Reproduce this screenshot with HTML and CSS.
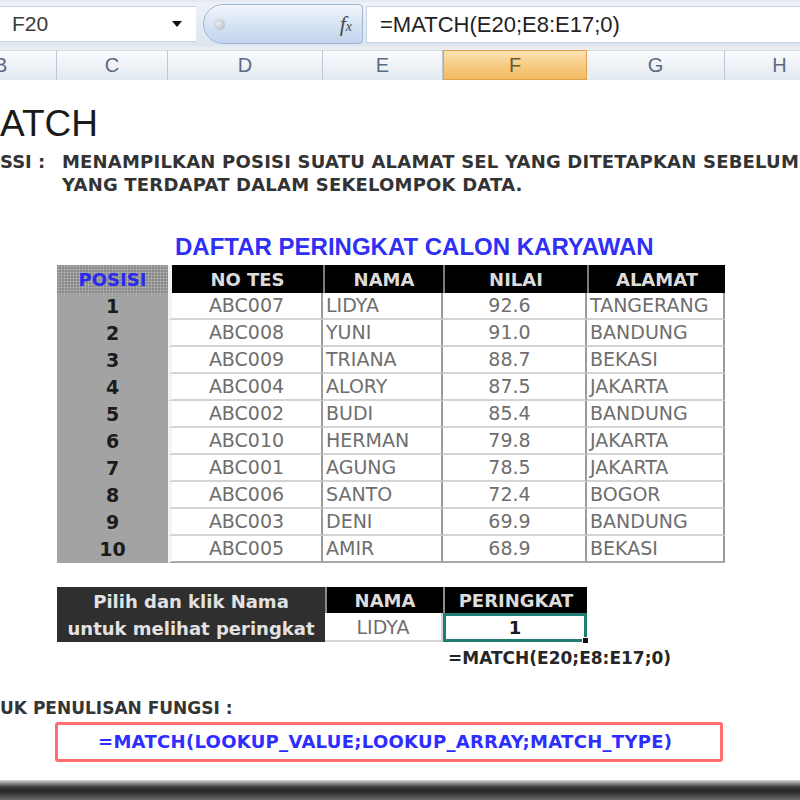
FILE: index.html
```html
<!DOCTYPE html>
<html>
<head>
<meta charset="utf-8">
<link rel="stylesheet" href="styles.css">
</head>
<body>
<div class="app">
  <div class="fbar">
    <div class="namebox"><span class="nb-text">F20</span><span class="nb-arrow"></span></div>
    <div class="fx-pill"><span class="dot"></span><span class="fx">f<span class="fx-x">x</span></span></div>
    <div class="finput">=MATCH(E20;E8:E17;0)</div>
  </div>
  <div class="colheads">
    <div class="ch ch-b"><span>B</span></div>
    <div class="ch ch-c">C</div>
    <div class="ch ch-d">D</div>
    <div class="ch ch-e">E</div>
    <div class="ch ch-f">F</div>
    <div class="ch ch-g">G</div>
    <div class="ch ch-h">H</div>
  </div>
  <div class="sheet">
    <div class="title">ATCH</div>
    <div class="desc">
      <div class="desc-label">SSI :</div>
      <div class="desc-text">MENAMPILKAN POSISI SUATU ALAMAT SEL YANG DITETAPKAN SEBELUMNYA<br>YANG TERDAPAT DALAM SEKELOMPOK DATA.</div>
    </div>
    <div class="list-title">DAFTAR PERINGKAT CALON KARYAWAN</div>
    <table class="rank">
      <colgroup>
        <col class="c-pos"><col class="c-no"><col class="c-nama"><col class="c-nilai"><col class="c-alamat">
      </colgroup>
      <thead>
        <tr><th class="pos">POSISI</th><th class="first">NO TES</th><th>NAMA</th><th>NILAI</th><th>ALAMAT</th></tr>
      </thead>
      <tbody>
        <tr><td class="pos">1</td><td class="ctr">ABC007</td><td>LIDYA</td><td class="num">92.6</td><td>TANGERANG</td></tr>
        <tr><td class="pos">2</td><td class="ctr">ABC008</td><td>YUNI</td><td class="num">91.0</td><td>BANDUNG</td></tr>
        <tr><td class="pos">3</td><td class="ctr">ABC009</td><td>TRIANA</td><td class="num">88.7</td><td>BEKASI</td></tr>
        <tr><td class="pos">4</td><td class="ctr">ABC004</td><td>ALORY</td><td class="num">87.5</td><td>JAKARTA</td></tr>
        <tr><td class="pos">5</td><td class="ctr">ABC002</td><td>BUDI</td><td class="num">85.4</td><td>BANDUNG</td></tr>
        <tr><td class="pos">6</td><td class="ctr">ABC010</td><td>HERMAN</td><td class="num">79.8</td><td>JAKARTA</td></tr>
        <tr><td class="pos">7</td><td class="ctr">ABC001</td><td>AGUNG</td><td class="num">78.5</td><td>JAKARTA</td></tr>
        <tr><td class="pos">8</td><td class="ctr">ABC006</td><td>SANTO</td><td class="num">72.4</td><td>BOGOR</td></tr>
        <tr><td class="pos">9</td><td class="ctr">ABC003</td><td>DENI</td><td class="num">69.9</td><td>BANDUNG</td></tr>
        <tr class="last"><td class="pos">10</td><td class="ctr">ABC005</td><td>AMIR</td><td class="num">68.9</td><td>BEKASI</td></tr>
      </tbody>
    </table>
    <div class="lookup">
      <div class="lk-prompt"><span>Pilih dan klik Nama</span><span>untuk melihat peringkat</span></div>
      <div class="lk-head">NAMA</div>
      <div class="lk-head">PERINGKAT</div>
      <div class="lk-name">LIDYA</div>
      <div class="lk-rank">1<span class="handle"></span></div>
    </div>
    <div class="formula-note">=MATCH(E20;E8:E17;0)</div>
    <div class="syntax-label">UK PENULISAN FUNGSI :</div>
    <div class="syntax-box">=MATCH(LOOKUP_VALUE;LOOKUP_ARRAY;MATCH_TYPE)</div>
  </div>
  <div class="bottom-band"></div>
</div>
</body>
</html>
```
FILE: styles.css
```css
* { box-sizing: border-box; }
html, body { margin: 0; padding: 0; background: #fff; }
.app {
  width: 800px;
  height: 800px;
  overflow: hidden;
  display: flex;
  flex-direction: column;
  font-family: "DejaVu Sans", sans-serif;
}

/* formula bar */
.fbar {
  height: 46px;
  flex: none;
  display: flex;
  align-items: center;
  background: linear-gradient(#eef2f7, #dde5ef);
  border-top: 2px solid #e6eaf0;
}
.namebox {
  width: 196px;
  height: 36px;
  background: #fff;
  display: flex;
  align-items: center;
  justify-content: space-between;
  padding: 0 12px 0 12px;
  border-top: 1px solid #c9d3df;
  border-bottom: 1px solid #c9d3df;
}
.nb-text {
  font-family: "Liberation Sans", Arial, sans-serif;
  font-size: 21px;
  color: #3a3a3a;
}
.nb-arrow {
  width: 0; height: 0;
  border-left: 5px solid transparent;
  border-right: 5px solid transparent;
  border-top: 6px solid #111;
  margin-right: 2px;
}
.fx-pill {
  margin-left: 7px;
  width: 160px;
  height: 40px;
  border-radius: 20px 4px 4px 20px;
  background: linear-gradient(#f2f6fc, #d2e0f2 60%, #c3d4ec);
  border: 1px solid #9fb6d4;
  display: flex;
  align-items: center;
  justify-content: space-between;
  padding: 0 10px 0 10px;
}
.dot {
  width: 11px; height: 11px;
  border-radius: 50%;
  background: radial-gradient(circle at 40% 40%, #eceff3, #a9b3bf);
}
.fx {
  font-family: "Liberation Serif", serif;
  font-style: italic;
  font-size: 22px;
  color: #4a4a4a;
}
.fx-x { font-size: 14px; }
.finput {
  flex: 1;
  height: 37px;
  margin-left: 3px;
  background: #fff;
  border-top: 1px solid #c9d3df;
  border-bottom: 1px solid #c9d3df;
  border-left: 1px solid #c9d3df;
  padding-left: 13px;
  font-family: "Liberation Sans", Arial, sans-serif;
  font-size: 22px;
  line-height: 35px;
  color: #222;
}

/* column headers */
.colheads {
  height: 34px;
  flex: none;
  display: flex;
  padding-top: 4px;
  background: #e9edf2;
}
.ch {
  flex: none;
  height: 30px;
  display: flex;
  align-items: center;
  justify-content: center;
  font-family: "Liberation Sans", Arial, sans-serif;
  font-size: 20px;
  color: #5b6b80;
  background: linear-gradient(#fafbfd, #e3e9f1);
  border-right: 1px solid #bcc8d8;
  border-top: 1px solid #d3dbe6;
}
.ch-b { width: 57px; justify-content: flex-start; }
.ch-b span { margin-left: -6px; }
.ch-c { width: 111px; }
.ch-d { width: 155px; }
.ch-e { width: 120px; }
.ch-f {
  width: 144px;
  background: linear-gradient(#fbe2b2, #f6c87c 60%, #f3ba63);
  border: 1px solid #e3a24a;
  color: #6a5a32;
}
.ch-g { width: 138px; }
.ch-h { width: 110px; }

/* sheet body */
.sheet {
  flex: 1;
  position: relative;
  overflow: hidden;
}
.title {
  margin-top: 25px;
  height: 37px;
  line-height: 37px;
  font-family: "Liberation Sans", Arial, sans-serif;
  font-size: 37px;
  color: #1a1a1a;
}
.desc {
  margin-top: 8px;
  display: flex;
  font-size: 18px;
  font-weight: bold;
  line-height: 23px;
  color: #333;
  white-space: nowrap;
}
.desc-label { width: 62px; flex: none; }
.desc-text { letter-spacing: 0.2px; }
.list-title {
  margin-top: 37px;
  height: 28px;
  line-height: 28px;
  padding-left: 175px;
  font-family: "Liberation Sans", Arial, sans-serif;
  font-weight: bold;
  font-size: 24px;
  color: #2f2ff6;
}

/* ranking table */
.rank {
  margin-top: 4px;
  margin-left: 57px;
  width: 668px;
  table-layout: fixed;
  border-collapse: separate;
  border-spacing: 0;
}
.c-pos { width: 111px; }
.c-no { width: 155px; }
.c-nama { width: 120px; }
.c-nilai { width: 144px; }
.c-alamat { width: 138px; }
.rank th {
  height: 28px;
  padding: 0;
  background: #000;
  color: #dcdcdc;
  font-size: 18px;
  font-weight: bold;
  text-align: center;
  border-left: 2px solid #7c7c7c;
}
.rank th.first { border-left: 4px solid #f2f2f2; }
.rank th.pos {
  border-left: none;
  color: #2b2bf0;
  background-color: #8a8a8a;
  background-image: radial-gradient(circle, #b5b5b5 0.8px, transparent 1.2px);
  background-size: 3px 3px;
}
.rank td {
  height: 25px;
  padding: 0 3px;
  line-height: 25px;
  font-size: 19px;
  color: #6e6e6e;
  white-space: nowrap;
  overflow: hidden;
  border-bottom: 2px solid #d4d4d4;
  border-right: 2px solid #9c9c9c;
}
.rank td.ctr { text-align: center; border-left: 4px solid #f5f5f5; }
.rank td.num { text-align: center; padding-right: 12px; }
.rank td.pos {
  background: #a3a3a3;
  color: #1c1c1c;
  font-weight: bold;
  text-align: center;
  border-right: none;
  border-bottom: none;
}
.rank tr.last td { border-bottom-color: #a8a8a8; }

/* lookup block */
.lookup {
  margin-top: 24px;
  margin-left: 57px;
  display: grid;
  grid-template-columns: 268px 118px 144px;
  grid-template-rows: 26px 29px;
  width: 530px;
}
.lk-prompt {
  grid-row: 1 / span 2;
  background: #2f2f2f;
  color: #e2e2e2;
  font-weight: bold;
  font-size: 18px;
  line-height: 27px;
  display: flex;
  flex-direction: column;
  align-items: center;
  justify-content: center;
}
.lk-head {
  background: #000;
  color: #dcdcdc;
  font-weight: bold;
  font-size: 18px;
  display: flex;
  align-items: center;
  justify-content: center;
  border-left: 2px solid #8a8a8a;
}
.lk-name {
  background: #fff;
  color: #6e6e6e;
  font-size: 19px;
  display: flex;
  align-items: center;
  justify-content: center;
  border-bottom: 2px solid #d4d4d4;
  border-right: 2px solid #d4d4d4;
}
.lk-rank {
  position: relative;
  border: 3px solid #1f7d73;
  background: #fff;
  color: #1a1a1a;
  font-weight: bold;
  font-size: 18px;
  display: flex;
  align-items: center;
  justify-content: center;
}
.handle {
  position: absolute;
  right: -5px;
  bottom: -5px;
  width: 7px;
  height: 7px;
  background: #111;
  border: 1px solid #fff;
}
.formula-note {
  margin-top: 6px;
  margin-left: 448px;
  height: 20px;
  line-height: 20px;
  font-size: 17px;
  font-weight: bold;
  color: #262626;
}
.syntax-label {
  margin-top: 30px;
  height: 20px;
  line-height: 20px;
  font-size: 17px;
  font-weight: bold;
  color: #353535;
}
.syntax-box {
  margin-top: 4px;
  margin-left: 55px;
  width: 668px;
  height: 40px;
  border: 3px solid #ff6e6e;
  border-radius: 3px;
  padding-left: 40px;
  line-height: 34px;
  font-size: 18px;
  font-weight: bold;
  letter-spacing: 0.3px;
  color: #2d2dff;
  white-space: nowrap;
}
.bottom-band {
  height: 20px;
  flex: none;
  background: linear-gradient(#d8d8d8 0, #3a3a3a 35%, #262626 55%, #6a6a6a 100%);
}
```
